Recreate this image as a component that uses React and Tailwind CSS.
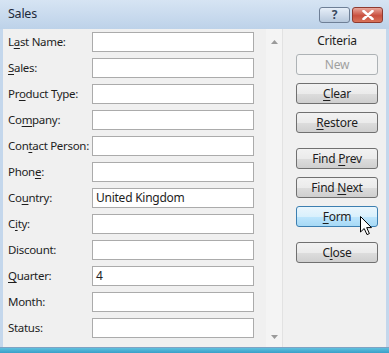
const fields = [
  { pre: "L", u: "a", post: "st Name:" },
  { pre: "", u: "S", post: "ales:" },
  { pre: "Pr", u: "o", post: "duct Type:" },
  { pre: "Co", u: "m", post: "pany:" },
  { pre: "Con", u: "t", post: "act Person:" },
  { pre: "Phon", u: "e", post: ":" },
  { pre: "Co", u: "u", post: "ntry:", value: "United Kingdom" },
  { pre: "C", u: "i", post: "ty:" },
  { pre: "Discount:", u: "", post: "" },
  { pre: "", u: "Q", post: "uarter:", value: "4" },
  { pre: "Month:", u: "", post: "" },
  { pre: "Status:", u: "", post: "" },
];

function Mnemonic({ pre, u, post }) {
  return (
    <span className="whitespace-nowrap">
      {pre}
      {u && <span className="underline underline-offset-2">{u}</span>}
      {post}
    </span>
  );
}

function Button({ pre, u, post, disabled, hover, className = "" }) {
  let look =
    "border-[#707070] bg-[linear-gradient(#f2f2f2_0%,#ebebeb_50%,#dddddd_51%,#cfcfcf_100%)] text-[#1e1e1e]";
  if (disabled) look = "border-[#adb2b5] bg-[#f4f4f4] text-[#a0a0a0]";
  if (hover)
    look =
      "border-[#3c7fb1] bg-[linear-gradient(#eaf6fd_0%,#d9f0fc_50%,#bee6fd_51%,#a7d9f5_100%)] text-[#1e1e1e]";
  return (
    <div
      className={`flex h-[21px] w-[82px] items-center justify-center rounded-[3px] border ${look} ${className}`}
    >
      <Mnemonic pre={pre} u={u} post={post} />
    </div>
  );
}

export default function App() {
  return (
    <div
      className="relative flex h-[353px] w-[389px] flex-col overflow-hidden bg-[#c4d7ec] text-[12px] leading-none tracking-[-0.25px] text-[#1e1e1e]"
      style={{ fontFamily: '"Noto Sans", "DejaVu Sans", sans-serif' }}
    >
      {/* title bar */}
      <div className="flex h-[29px] items-center bg-[linear-gradient(#d6e4f3,#bdd2e9)] pl-[8px] pr-[6px]">
        <span className="text-[12.5px] text-[#1e2a3a]">Sales</span>
        <div className="ml-auto flex gap-[2px]">
          <div className="flex h-[16px] w-[31px] items-center justify-center rounded-[3px] border border-[#6e7f96] bg-[linear-gradient(#e6eef8,#b7c8dc)] text-[12px] font-bold text-[#3b4a5e]">
            ?
          </div>
          <div className="flex h-[16px] w-[31px] items-center justify-center rounded-[3px] border border-[#8e3a30] bg-[linear-gradient(#e9a79c,#c9503f_55%,#d8735a)]">
            <svg width="12" height="10" viewBox="0 0 12 10">
              <path
                d="M1.5 1 L10.5 9 M10.5 1 L1.5 9"
                stroke="#ffffff"
                strokeWidth="2.6"
                strokeLinecap="round"
              />
            </svg>
          </div>
        </div>
      </div>

      {/* body */}
      <div className="mx-[3px] flex flex-1 bg-[#f0f0f0]">
        <div className="flex flex-col gap-[6px] pl-[5px] pt-[3px]">
          {fields.map((f, i) => (
            <div key={i} className="flex h-[20px] items-center">
              <div className="w-[84px] text-[11.5px] tracking-[-0.3px]">
                <Mnemonic pre={f.pre} u={f.u} post={f.post} />
              </div>
              <div className="flex h-[20px] w-[162px] items-center border border-[#ababab] bg-white px-[3px]">
                {f.value}
              </div>
            </div>
          ))}
        </div>

        {/* scroll bar */}
        <div className="ml-[12px] flex w-[17px] flex-col items-center justify-between border-r border-[#e2e2e2] bg-[#f4f4f4] pb-[8px] pt-[11px]">
          <svg width="7" height="4" viewBox="0 0 7 4">
            <path d="M0 4 L3.5 0 L7 4 Z" fill="#9a9a9a" />
          </svg>
          <svg width="7" height="4" viewBox="0 0 7 4">
            <path d="M0 0 L3.5 4 L7 0 Z" fill="#9a9a9a" />
          </svg>
        </div>

        {/* right panel */}
        <div className="flex flex-1 flex-col pl-[13px] pt-[4px]">
          <div className="flex h-[16px] w-[82px] items-center justify-center">Criteria</div>
          <Button pre="New" u="" post="" disabled className="mt-[5px]" />
          <Button pre="" u="C" post="lear" className="mt-[8px]" />
          <Button pre="" u="R" post="estore" className="mt-[8px]" />
          <Button pre="Find " u="P" post="rev" className="mt-[15px]" />
          <Button pre="Find " u="N" post="ext" className="mt-[8px]" />
          <Button pre="" u="F" post="orm" hover className="mt-[8px]" />
          <Button pre="C" u="l" post="ose" className="mt-[15px]" />
        </div>
      </div>

      {/* bottom frame */}
      <div className="h-[6px] border-t border-[#7fa3c4] bg-[linear-gradient(#5fc0de,#3a9fc8)]"></div>

      {/* mouse cursor */}
      <svg
        className="absolute left-[360px] top-[216px]"
        width="13"
        height="20"
        viewBox="0 0 13 20"
      >
        <path
          d="M0.5 0.5 L0.5 16 L4.2 12.5 L7 18.6 L9.4 17.6 L6.7 11.6 L11.5 11.6 Z"
          fill="#ffffff"
          stroke="#000000"
          strokeWidth="1"
          strokeLinejoin="round"
        />
      </svg>
    </div>
  );
}
